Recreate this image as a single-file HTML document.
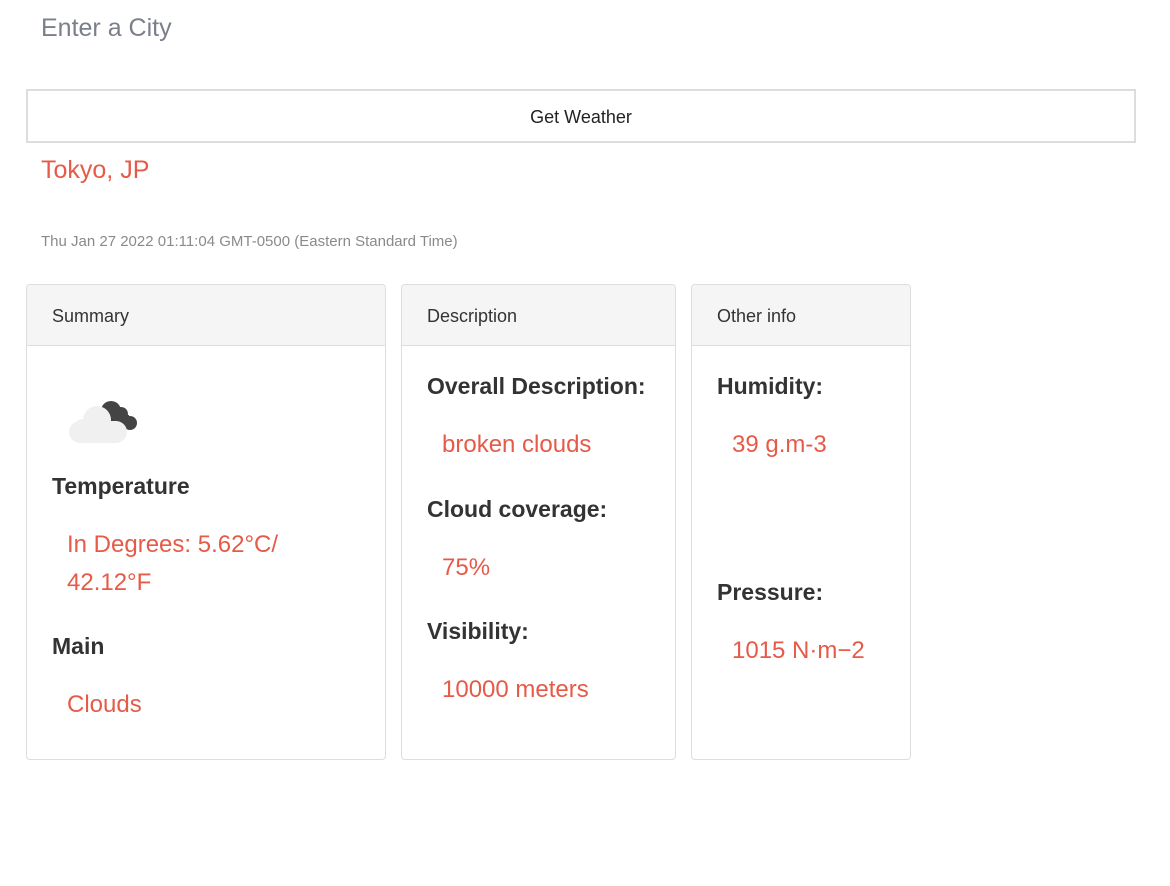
<!DOCTYPE html>
<html><head><meta charset="utf-8"><style>
body{margin:0;width:1170px;height:886px;background:#fff;font-family:"Liberation Sans",sans-serif;color:#333;position:relative}
.a{position:absolute}
.red{color:#e65a48;font-weight:300}
.card{position:absolute;top:284px;height:474px;border:1px solid #ddd;border-radius:4px;background:#fff}
.hd{height:60px;background:#f5f5f5;border-bottom:1px solid #ddd;font-size:18px;line-height:62px;padding-left:25px;color:#333;border-radius:4px 4px 0 0}
.h{position:absolute;left:25px;font-size:23px;font-weight:bold;color:#333}
.v{position:absolute;left:40px;font-size:24px;color:#e65a48;line-height:38px}
</style></head><body>
<div class="a" style="left:41px;top:14px;font-size:25px;color:#7b7f8a">Enter a City</div>
<div class="a" style="left:26px;top:89px;width:1106px;height:50px;border:2px solid #ddd;text-align:center;line-height:52px;font-size:18px;color:#222">Get Weather</div>
<div class="a red" style="left:41px;top:156px;font-size:25px">Tokyo, JP</div>
<div class="a" style="left:41px;top:233px;font-size:15px;color:#8a8a8a">Thu Jan 27 2022 01:11:04 GMT-0500 (Eastern Standard Time)</div>

<div class="card" style="left:26px;width:358px">
<div class="hd">Summary</div>
<svg class="a" style="left:40px;top:110px" width="72" height="50" viewBox="0 0 72 50">
<g fill="#444"><circle cx="44" cy="16" r="10"/><circle cx="54" cy="19" r="7"/><circle cx="63" cy="28" r="7"/><rect x="40" y="20" width="22" height="14"/></g>
<g fill="#f0f0f0"><rect x="2" y="26" width="58" height="22" rx="11"/><circle cx="30" cy="25" r="14"/><circle cx="16" cy="34" r="10"/></g>
</svg>
<div class="h" style="top:188px">Temperature</div>
<div class="v" style="top:241px">In Degrees: 5.62°C/<br>42.12°F</div>
<div class="h" style="top:348px">Main</div>
<div class="v" style="top:401px">Clouds</div>
</div>

<div class="card" style="left:401px;width:273px">
<div class="hd">Description</div>
<div class="h" style="top:88px">Overall Description:</div>
<div class="v" style="top:141px">broken clouds</div>
<div class="h" style="top:211px">Cloud coverage:</div>
<div class="v" style="top:264px">75%</div>
<div class="h" style="top:333px">Visibility:</div>
<div class="v" style="top:386px">10000 meters</div>
</div>

<div class="card" style="left:691px;width:218px">
<div class="hd">Other info</div>
<div class="h" style="top:88px">Humidity:</div>
<div class="v" style="top:141px">39 g.m-3</div>
<div class="h" style="top:294px">Pressure:</div>
<div class="v" style="top:347px">1015 N·m−2</div>
</div>
</body></html>
